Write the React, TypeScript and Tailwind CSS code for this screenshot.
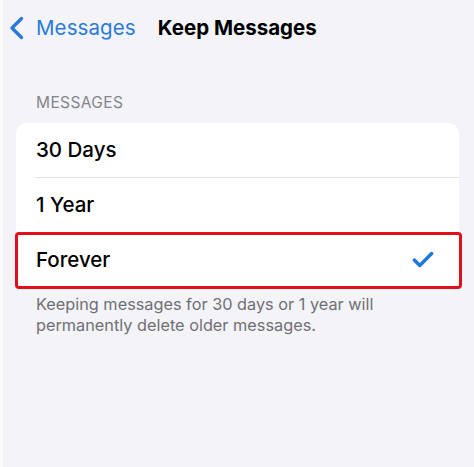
import { Check } from "lucide-react"

const options = ["30 Days", "1 Year", "Forever"]

export default function App() {
  const selected = "Forever"

  return (
    <div
      className="h-[467px] w-[474px] overflow-hidden bg-[#f3f3f8] border-l-[3px] border-[#fbfbfd]"
      style={{ fontFamily: "Inter, 'Noto Sans', sans-serif" }}
    >
      {/* Nav bar */}
      <div className="flex h-[56px] items-center pl-[5px]">
        <svg width="17" height="24" viewBox="0 0 17 24" className="text-[#2a7bd9]">
          <path d="M13.5 2.5 L4 12 L13.5 21.5" fill="none" stroke="currentColor" strokeWidth="3.4" strokeLinecap="round" strokeLinejoin="round" />
        </svg>
        <span className="ml-[11px] text-[20.5px] text-[#2a7bd9] tracking-[0.1px]">Messages</span>
        <span className="ml-[22px] text-[20.5px] font-bold text-black">Keep Messages</span>
      </div>

      {/* Section */}
      <div className="pt-[37px]">
        <div className="pl-[33px] text-[15.5px] leading-[20px] tracking-[0.4px] text-[#85858a]">MESSAGES</div>
        <div className="mt-[10px] ml-[13px] w-[443px] rounded-[10px] bg-white">
          {options.map((opt, i) => {
            const isSelected = opt === selected
            return (
              <div key={opt} className="relative">
                <div className="flex h-[54px] items-center justify-between pl-[20px] pr-[23px]">
                  <span className="text-[20.5px] font-medium text-black">{opt}</span>
                  {isSelected && <Check className="h-[26px] w-[26px] text-[#1f78db]" strokeWidth={3.2} />}
                </div>
                {i < options.length - 1 && <div className="ml-[19px] h-px bg-[#e2e2e6]" />}
                {isSelected && (
                  <div className="pointer-events-none absolute -left-[1px] -right-[3px] -top-[1px] -bottom-[2px] rounded-[4px] border-[3px] border-[#e0101c]" />
                )}
              </div>
            )
          })}
        </div>
        <p className="mt-[7px] pl-[33px] pr-[40px] text-[16.3px] leading-[21px] text-[#707075]">
          Keeping messages for 30 days or 1 year will
          <br />
          permanently delete older messages.
        </p>
      </div>
    </div>
  )
}
